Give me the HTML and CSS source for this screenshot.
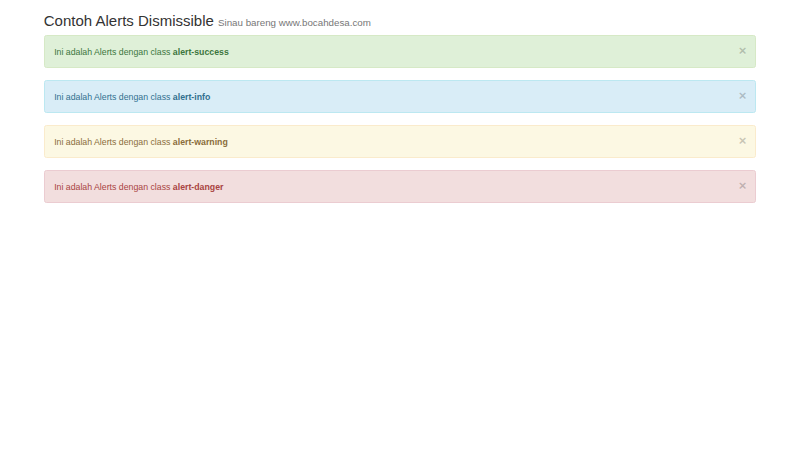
FILE: index.html
```html
<!DOCTYPE html>
<html lang="id">
<head>
<meta charset="utf-8">
<title>Contoh Alerts Dismissible</title>
<link rel="stylesheet" href="styles.css">
</head>
<body>
<div class="container">
  <h3 class="title">Contoh Alerts Dismissible <small>Sinau bareng www.bocahdesa.com</small></h3>
  <div class="alert alert-success">
    <span class="msg">Ini adalah Alerts dengan class <strong>alert-success</strong></span>
    <button class="close" type="button" aria-label="close">&times;</button>
  </div>
  <div class="alert alert-info">
    <span class="msg">Ini adalah Alerts dengan class <strong>alert-info</strong></span>
    <button class="close" type="button" aria-label="close">&times;</button>
  </div>
  <div class="alert alert-warning">
    <span class="msg">Ini adalah Alerts dengan class <strong>alert-warning</strong></span>
    <button class="close" type="button" aria-label="close">&times;</button>
  </div>
  <div class="alert alert-danger">
    <span class="msg">Ini adalah Alerts dengan class <strong>alert-danger</strong></span>
    <button class="close" type="button" aria-label="close">&times;</button>
  </div>
</div>
</body>
</html>
```
FILE: styles.css
```css
* { box-sizing: border-box; }
html, body { margin: 0; padding: 0; background: #fff; }
body {
  font-family: "Liberation Sans", Arial, Helvetica, sans-serif;
  font-size: 8.75px;
  line-height: 12.5px;
  color: #333;
}
.container {
  width: 712.5px;
  margin: 0 auto;
}
.title {
  font-size: 15px;
  font-weight: 500;
  line-height: 1.1;
  margin: 12.5px 0 6.25px;
  color: #333;
}
.title small {
  font-size: 65%;
  font-weight: 400;
  color: #777;
}
.alert {
  display: flex;
  align-items: flex-start;
  height: 32.5px;
  padding: 9.25px 21.875px 9.25px 9.375px;
  margin-bottom: 12.5px;
  border: 1px solid transparent;
  border-radius: 2.5px;
}
.msg { flex: 1; }
.alert strong { font-weight: 700; }
.close {
  font-family: "Liberation Sans", Arial, Helvetica, sans-serif;
  font-size: 13.125px;
  font-weight: 700;
  line-height: 1;
  height: 12.5px;
  color: #000;
  text-shadow: 0 1px 0 #fff;
  opacity: 0.2;
  background: transparent;
  border: 0;
  padding: 0;
  margin: -1.25px -13.125px 0 0;
  cursor: pointer;
}
.alert-success { background: #dff0d8; border-color: #d6e9c6; color: #3c763d; }
.alert-info { background: #d9edf7; border-color: #bce8f1; color: #31708f; }
.alert-warning { background: #fcf8e3; border-color: #faebcc; color: #8a6d3b; }
.alert-danger { background: #f2dede; border-color: #ebccd1; color: #a94442; }
```
